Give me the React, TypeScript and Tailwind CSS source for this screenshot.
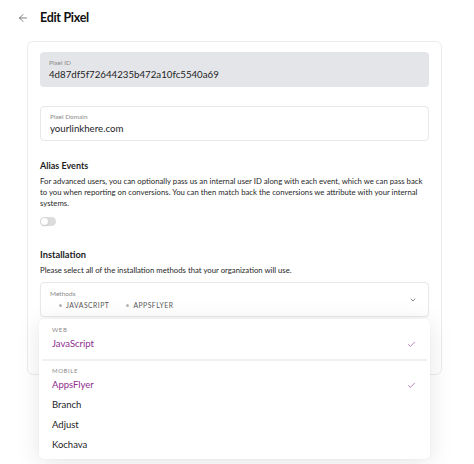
import { ArrowLeft, Check, ChevronDown } from "lucide-react";

const font = { fontFamily: "Lato, 'Liberation Sans', sans-serif" };

function Field({ label, value, filled }: { label: string; value: string; filled?: boolean }) {
    return (
        <div
            className={
                filled
                    ? "flex h-[35px] flex-col justify-center rounded-[4px] bg-[#e4e5e8] px-[9px]"
                    : "flex h-[35px] flex-col justify-center rounded-[4px] border border-[#e8e8e8] bg-white px-[9px]"
            }
        >
            <span className="text-[6.5px] leading-[9px] text-[#8a8a8a]">{label}</span>
            <span className="mt-[1px] text-[9.7px] leading-[13px] text-[#1d1d1f]">{value}</span>
        </div>
    );
}

function Option({ label, selected }: { label: string; selected?: boolean }) {
    return (
        <div className="flex h-[20px] items-center justify-between pl-[13px] pr-[14px]">
            <span className={selected ? "text-[9.5px] text-[#8e2c8f]" : "text-[9.5px] text-[#1d1d1f]"}>{label}</span>
            {selected && <Check className="h-[9px] w-[9px] text-[#8e2c8f]" strokeWidth={1.6} />}
        </div>
    );
}

export default function App() {
    return (
        <div className="relative h-[464px] w-[474px] overflow-hidden bg-white" style={font}>
            {/* Header */}
            <div className="flex h-[36px] items-center pl-[17px]">
                <ArrowLeft className="h-[12px] w-[12px] text-[#555]" strokeWidth={1.5} />
                <h1 className="ml-[11px] text-[12.5px] font-bold tracking-[-0.3px] text-[#111]">Edit Pixel</h1>
            </div>

            {/* Card */}
            <div className="ml-[27px] mt-[5px] w-[415px] rounded-[6px] border border-[#ececec] px-[12px] pb-[57px] pt-[10px]">
                <Field label="Pixel ID" value="4d87df5f72644235b472a10fc5540a69" filled />
                <div className="h-[19px]" />
                <Field label="Pixel Domain" value="yourlinkhere.com" />

                <h2 className="mt-[19px] text-[9px] font-bold leading-[12px] text-[#1d1d1f]">Alias Events</h2>
                <p className="mt-[4px] text-[7.75px] leading-[11px] text-[#1f1f1f]">
                    For advanced users, you can optionally pass us an internal user ID along with each event, which we can pass back to you when reporting on conversions. You can then match back the conversions we attribute with your internal systems.
                </p>
                <div className="mt-[8px] flex h-[9px] w-[16px] items-center rounded-full bg-[#dcdcdc] px-[1px]">
                    <div className="h-[7px] w-[7px] rounded-full bg-white shadow-sm" />
                </div>

                <h2 className="mt-[23px] text-[9.3px] font-bold leading-[12px] text-[#1d1d1f]">Installation</h2>
                <p className="mt-[4px] text-[7.75px] leading-[11px] text-[#1f1f1f]">
                    Please select all of the installation methods that your organization will use.
                </p>

                <div className="mt-[6px] flex h-[35px] items-center justify-between rounded-[4px] border border-[#e8e8e8] bg-white pl-[9px] pr-[11px] shadow-[0_1px_2px_rgba(0,0,0,0.04)]">
                    <div className="flex flex-col">
                        <span className="text-[6.5px] leading-[9px] text-[#8a8a8a]">Methods</span>
                        <div className="mt-[2px] flex items-center pl-[9px] text-[6.8px] uppercase tracking-[0.5px] text-[#555]">
                            <span className="mr-[4px] h-[3px] w-[3px] rounded-full bg-[#b5b5b5]" />
                            <span>JavaScript</span>
                            <span className="ml-[17px] mr-[4px] h-[3px] w-[3px] rounded-full bg-[#b5b5b5]" />
                            <span>AppsFlyer</span>
                        </div>
                    </div>
                    <ChevronDown className="h-[8px] w-[8px] text-[#555]" strokeWidth={2} />
                </div>
            </div>

            {/* Dropdown menu */}
            <div className="absolute left-[39px] top-[319px] w-[391px] rounded-[5px] bg-white pb-[4px] pt-[4px] shadow-[0_4px_24px_rgba(0,0,0,0.10),0_0_2px_rgba(0,0,0,0.06)]">
                <div className="pl-[13px] pt-[2px] text-[6px] leading-[9px] tracking-[0.6px] text-[#8a8a8a]">WEB</div>
                <Option label="JavaScript" selected />
                <div className="mx-[3px] mt-[5px] h-[2px] bg-[#f0f0f0]" />
                <div className="pl-[13px] pt-[5px] text-[6px] leading-[9px] tracking-[0.6px] text-[#8a8a8a]">MOBILE</div>
                <Option label="AppsFlyer" selected />
                <Option label="Branch" />
                <Option label="Adjust" />
                <Option label="Kochava" />
            </div>
        </div>
    );
}
